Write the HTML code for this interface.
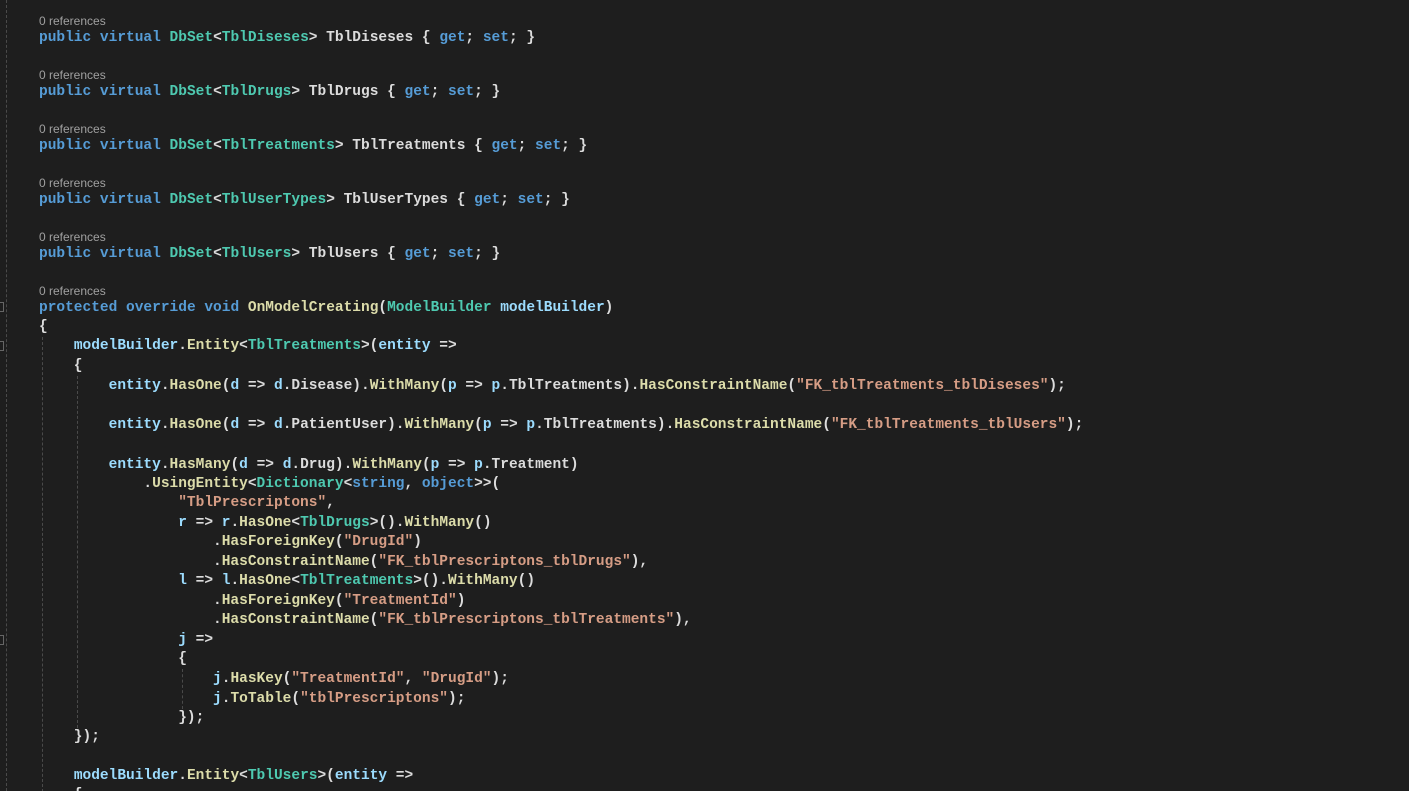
<!DOCTYPE html>
<html><head><meta charset="utf-8"><style>
html,body{margin:0;padding:0;background:#1e1e1e;width:1409px;height:791px;overflow:hidden;position:relative}
#w{position:absolute;left:0;top:1px;width:1409px;height:791px}
.l{position:absolute;left:39px;white-space:pre;font-family:"Liberation Mono","DejaVu Sans Mono",monospace;font-size:14.5px;line-height:20px;color:#dcdcdc;font-weight:bold;letter-spacing:0}
.r{position:absolute;left:39px;font-family:"Liberation Sans",sans-serif;font-size:12px;line-height:14px;color:#a0a0a0}
.k{color:#569cd6}.t{color:#4ec9b0}.m{color:#dcdcaa}.v{color:#9cdcfe}.s{color:#d69d85}
.g{position:absolute;width:0;border-left:1px dashed #4a4a4a}
.b{position:absolute;left:0;width:3px;height:8px;border:1px solid #666;border-left:none}
</style></head><body>
<div class="g" style="left:6px;top:0;height:791px"></div>
<div id="w">
<div class="b" style="top:301px"></div>
<div class="b" style="top:340px"></div>
<div class="b" style="top:634px"></div>
<div class="g" style="left:42px;top:336px;height:455px"></div>
<div class="g" style="left:77px;top:375px;height:352px"></div>
<div class="g" style="left:182px;top:668px;height:40px"></div>

<div class="r" style="top:13px">0 references</div>
<div class="l" style="top:27px"><span class="k">public</span> <span class="k">virtual</span> <span class="t">DbSet</span>&lt;<span class="t">TblDiseses</span>&gt; TblDiseses { <span class="k">get</span>; <span class="k">set</span>; }</div>
<div class="r" style="top:67px">0 references</div>
<div class="l" style="top:81px"><span class="k">public</span> <span class="k">virtual</span> <span class="t">DbSet</span>&lt;<span class="t">TblDrugs</span>&gt; TblDrugs { <span class="k">get</span>; <span class="k">set</span>; }</div>
<div class="r" style="top:121px">0 references</div>
<div class="l" style="top:135px"><span class="k">public</span> <span class="k">virtual</span> <span class="t">DbSet</span>&lt;<span class="t">TblTreatments</span>&gt; TblTreatments { <span class="k">get</span>; <span class="k">set</span>; }</div>
<div class="r" style="top:175px">0 references</div>
<div class="l" style="top:189px"><span class="k">public</span> <span class="k">virtual</span> <span class="t">DbSet</span>&lt;<span class="t">TblUserTypes</span>&gt; TblUserTypes { <span class="k">get</span>; <span class="k">set</span>; }</div>
<div class="r" style="top:229px">0 references</div>
<div class="l" style="top:243px"><span class="k">public</span> <span class="k">virtual</span> <span class="t">DbSet</span>&lt;<span class="t">TblUsers</span>&gt; TblUsers { <span class="k">get</span>; <span class="k">set</span>; }</div>
<div class="r" style="top:283px">0 references</div>
<div class="l" style="top:297px"><span class="k">protected</span> <span class="k">override</span> <span class="k">void</span> <span class="m">OnModelCreating</span>(<span class="t">ModelBuilder</span> <span class="v">modelBuilder</span>)</div>
<div class="l" style="top:316px">{</div>
<div class="l" style="top:335px">    <span class="v">modelBuilder</span>.<span class="m">Entity</span>&lt;<span class="t">TblTreatments</span>&gt;(<span class="v">entity</span> =&gt;</div>
<div class="l" style="top:355px">    {</div>
<div class="l" style="top:375px">        <span class="v">entity</span>.<span class="m">HasOne</span>(<span class="v">d</span> =&gt; <span class="v">d</span>.Disease).<span class="m">WithMany</span>(<span class="v">p</span> =&gt; <span class="v">p</span>.TblTreatments).<span class="m">HasConstraintName</span>(<span class="s">"FK_tblTreatments_tblDiseses"</span>);</div>
<div class="l" style="top:414px">        <span class="v">entity</span>.<span class="m">HasOne</span>(<span class="v">d</span> =&gt; <span class="v">d</span>.PatientUser).<span class="m">WithMany</span>(<span class="v">p</span> =&gt; <span class="v">p</span>.TblTreatments).<span class="m">HasConstraintName</span>(<span class="s">"FK_tblTreatments_tblUsers"</span>);</div>
<div class="l" style="top:454px">        <span class="v">entity</span>.<span class="m">HasMany</span>(<span class="v">d</span> =&gt; <span class="v">d</span>.Drug).<span class="m">WithMany</span>(<span class="v">p</span> =&gt; <span class="v">p</span>.Treatment)</div>
<div class="l" style="top:473px">            .<span class="m">UsingEntity</span>&lt;<span class="t">Dictionary</span>&lt;<span class="k">string</span>, <span class="k">object</span>&gt;&gt;(</div>
<div class="l" style="top:492px">                <span class="s">"TblPrescriptons"</span>,</div>
<div class="l" style="top:512px">                <span class="v">r</span> =&gt; <span class="v">r</span>.<span class="m">HasOne</span>&lt;<span class="t">TblDrugs</span>&gt;().<span class="m">WithMany</span>()</div>
<div class="l" style="top:531px">                    .<span class="m">HasForeignKey</span>(<span class="s">"DrugId"</span>)</div>
<div class="l" style="top:551px">                    .<span class="m">HasConstraintName</span>(<span class="s">"FK_tblPrescriptons_tblDrugs"</span>),</div>
<div class="l" style="top:570px">                <span class="v">l</span> =&gt; <span class="v">l</span>.<span class="m">HasOne</span>&lt;<span class="t">TblTreatments</span>&gt;().<span class="m">WithMany</span>()</div>
<div class="l" style="top:590px">                    .<span class="m">HasForeignKey</span>(<span class="s">"TreatmentId"</span>)</div>
<div class="l" style="top:609px">                    .<span class="m">HasConstraintName</span>(<span class="s">"FK_tblPrescriptons_tblTreatments"</span>),</div>
<div class="l" style="top:629px">                <span class="v">j</span> =&gt;</div>
<div class="l" style="top:648px">                {</div>
<div class="l" style="top:668px">                    <span class="v">j</span>.<span class="m">HasKey</span>(<span class="s">"TreatmentId"</span>, <span class="s">"DrugId"</span>);</div>
<div class="l" style="top:688px">                    <span class="v">j</span>.<span class="m">ToTable</span>(<span class="s">"tblPrescriptons"</span>);</div>
<div class="l" style="top:707px">                });</div>
<div class="l" style="top:726px">    });</div>
<div class="l" style="top:765px">    <span class="v">modelBuilder</span>.<span class="m">Entity</span>&lt;<span class="t">TblUsers</span>&gt;(<span class="v">entity</span> =&gt;</div>
<div class="l" style="top:784px">    {</div>
</div>
</body></html>
